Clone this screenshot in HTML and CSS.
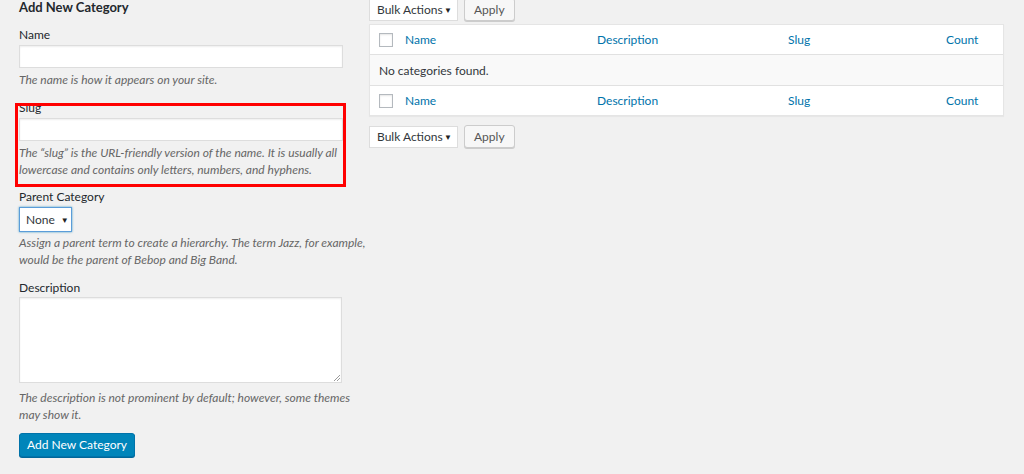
FILE: index.html
```html
<!DOCTYPE html>
<html>
<head>
<meta charset="utf-8">
<link rel="stylesheet" href="styles.css">
</head>
<body>
<div class="wrap">
  <div class="col-left">
    <h2 class="heading">Add New Category</h2>
    <div class="field field-first">
      <label class="label">Name</label>
      <div class="input"></div>
      <p class="help">The name is how it appears on your site.</p>
    </div>
    <div class="field">
      <label class="label">Slug</label>
      <div class="input"></div>
      <p class="help">The “slug” is the URL-friendly version of the name. It is usually all lowercase and contains only letters, numbers, and hyphens.</p>
    </div>
    <div class="field field-parent">
      <label class="label">Parent Category</label>
      <div class="select select-focus"><span>None</span><span class="arrow">▼</span></div>
      <p class="help help-parent">Assign a parent term to create a hierarchy. The term Jazz, for example, would be the parent of Bebop and Big Band.</p>
    </div>
    <div class="field field-desc">
      <label class="label label-tight">Description</label>
      <div class="textarea">
        <svg class="grip" width="7" height="7" viewBox="0 0 7 7"><path d="M1 7L7 1M4 7L7 4" stroke="#9a9a9a" stroke-width="1"/></svg>
      </div>
      <p class="help help-desc">The description is not prominent by default; however, some themes may show it.</p>
    </div>
    <div class="button-primary">Add New Category</div>
    <div class="highlight"></div>
  </div>
  <div class="col-right">
    <div class="tablenav tablenav-top">
      <div class="select bulk"><span>Bulk Actions</span><span class="arrow">▼</span></div>
      <div class="button">Apply</div>
    </div>
    <div class="table">
      <div class="row row-head">
        <span class="check"></span>
        <span class="c-name">Name</span>
        <span class="c-desc">Description</span>
        <span class="c-slug">Slug</span>
        <span class="c-count">Count</span>
      </div>
      <div class="row row-empty">No categories found.</div>
      <div class="row row-foot">
        <span class="check"></span>
        <span class="c-name">Name</span>
        <span class="c-desc">Description</span>
        <span class="c-slug">Slug</span>
        <span class="c-count">Count</span>
      </div>
    </div>
    <div class="tablenav tablenav-bottom">
      <div class="select bulk"><span>Bulk Actions</span><span class="arrow">▼</span></div>
      <div class="button">Apply</div>
    </div>
  </div>
</div>
</body>
</html>
```
FILE: styles.css
```css
* { box-sizing: border-box; }
html, body { margin: 0; padding: 0; }
body {
  background: #f1f1f1;
  font-family: Lato, "Noto Sans", sans-serif;
  font-size: 12px;
  color: #23282d;
  width: 1024px;
  height: 474px;
  overflow: hidden;
}
.wrap {
  display: flex;
  align-items: flex-start;
}
.col-left {
  position: relative;
  width: 367px;
  padding-left: 19px;
  flex: none;
}
.heading {
  margin: -3px 0 0;
  font-size: 13px;
  font-weight: 700;
  line-height: 20px;
  color: #23282d;
}
.field { margin-top: 11px; }
.field-first { margin-top: 9px; }
.field-parent { margin-top: 10px; }
.field-desc { margin-top: 11px; }
.label {
  display: block;
  line-height: 18px;
  margin-bottom: 1px;
}
.label-tight { margin-bottom: 0; }
.input {
  width: 324px;
  height: 23px;
  background: #fff;
  border: 1px solid #ddd;
  box-shadow: inset 0 1px 2px rgba(0,0,0,.07);
}
.help {
  margin: 3px 0 0;
  font-style: italic;
  color: #666;
  line-height: 17px;
}
.help-parent { margin-top: 2px; }
.help-desc { margin-top: 6px; }
.select {
  display: inline-flex;
  align-items: center;
  justify-content: space-between;
  white-space: nowrap;
  height: 25px;
  background: #fff;
  border: 1px solid #ddd;
  padding: 0 5px 0 6px;
  color: #32373c;
}
.select-focus {
  width: 53px;
  border-color: #5b9dd9;
  box-shadow: 0 0 2px rgba(30,140,190,.8);
}
.arrow {
  font-size: 8px;
  color: #222;
  margin-left: 6px;
}
.textarea {
  position: relative;
  width: 323px;
  height: 86px;
  background: #fff;
  border: 1px solid #ddd;
  box-shadow: inset 0 1px 2px rgba(0,0,0,.07);
}
.grip { position: absolute; right: 1px; bottom: 1px; }
.button-primary {
  display: inline-block;
  margin-top: 10px;
  height: 24px;
  line-height: 22px;
  padding: 0 7px;
  background: #0085ba;
  border: 1px solid #0073aa;
  border-radius: 3px;
  box-shadow: 0 1px 0 #006799;
  color: #fff;
}
.highlight {
  position: absolute;
  left: 15px;
  top: 103px;
  width: 331px;
  height: 84px;
  border: 3px solid #f00;
}
.col-right {
  margin-left: 2px;
  width: 635px;
  flex: none;
}
.tablenav {
  display: flex;
  align-items: center;
  gap: 6px;
  height: 23px;
}
.tablenav-top { margin-top: -2px; }
.bulk { width: 89px; height: 22px; padding: 0 5px 0 7px; }
.bulk .arrow { margin-left: 0; }
.button {
  height: 23px;
  line-height: 21px;
  padding: 0 9px;
  background: #f7f7f7;
  border: 1px solid #ccc;
  border-radius: 3px;
  box-shadow: 0 1px 0 #ccc;
  color: #555;
}
.table {
  margin-top: 3px;
  background: #fff;
  border: 1px solid #e5e5e5;
  box-shadow: 0 1px 1px rgba(0,0,0,.04);
}
.row {
  display: flex;
  align-items: center;
  height: 30px;
  padding-left: 9px;
}
.row-head { border-bottom: 1px solid #e1e1e1; }
.row-foot { border-top: 1px solid #e1e1e1; }
.row-empty { background: #f9f9f9; color: #32373c; }
.check {
  width: 14px;
  height: 14px;
  border: 1px solid #b4b9be;
  background: #fff;
  box-shadow: inset 0 1px 2px rgba(0,0,0,.1);
  flex: none;
}
.c-name, .c-desc, .c-slug, .c-count { color: #0073aa; }
.c-name { margin-left: 12px; width: 192px; }
.c-desc { width: 191px; }
.c-slug { width: 158px; }
.tablenav-bottom { margin-top: 9px; }
```
